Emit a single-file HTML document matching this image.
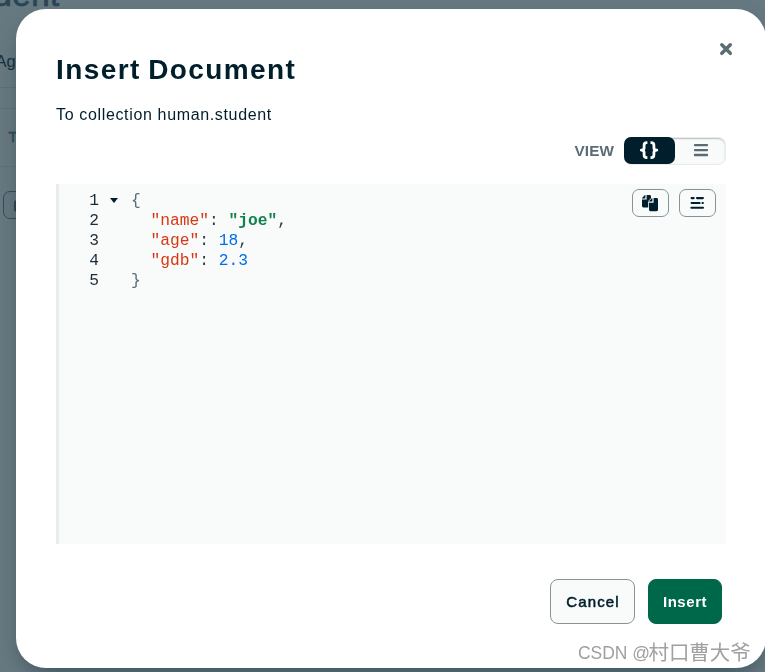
<!DOCTYPE html>
<html lang="en">
<head>
<meta charset="utf-8">
<title>Insert Document</title>
<style>
*{box-sizing:border-box;margin:0;padding:0}
html,body{width:765px;height:672px;overflow:hidden}
body{position:relative;background:#fff;font-family:"Liberation Sans","Noto Sans CJK SC",sans-serif;color:#001e2b}
.abs{position:absolute}
/* page behind the modal */
#page{left:0;top:0;width:765px;height:672px;background:#fff;overflow:hidden}
#page .h1{left:-52px;top:-25.3px;font-size:33px;font-weight:400;-webkit-text-stroke:.7px #698296;color:#698296;letter-spacing:.5px;white-space:nowrap;line-height:40px}
#page .tab{left:-4.5px;top:51px;font-size:16.5px;color:#3d4f58;line-height:20px}
#page .ln1{left:0;top:87px;width:40px;height:1px;background:#e8edeb}
#page .ln3{left:0;top:108px;width:40px;height:1px;background:#e8edeb}
#page .ln2{left:0;top:166px;width:40px;height:1px;background:#e8edeb}
#page .t{left:8.6px;top:126.6px;font-size:14.6px;color:#7c8f9a;-webkit-text-stroke:.6px #7c8f9a;line-height:20px}
#page .btn{left:3px;top:191px;width:40px;height:28px;border:1px solid #889397;border-radius:7px;background:#f9fbfa}
#page .bi{left:14.2px;top:200px;width:6px;height:11.5px;background:#6e8291;border-radius:3px 0 0 3px}
#layer{left:0;top:0;width:765px;height:672px;will-change:transform}
#overlay{left:0;top:0;width:765px;height:672px;background:rgba(0,30,43,.6)}
/* modal */
#modal{left:16px;top:9px;width:750px;height:659px;background:#fff;border-radius:30px;box-shadow:0 10px 25px -10px rgba(0,30,43,.6)}
#close{left:719px;top:42px;width:14px;height:14px}
h1.title{left:56px;top:52.4px;font-size:28px;line-height:36px;font-weight:700;color:#001e2b;white-space:nowrap;letter-spacing:1.4px;word-spacing:-1.7px}
.sub{left:56px;top:105px;font-size:16px;line-height:20px;color:#001e2b;white-space:nowrap;letter-spacing:.65px}
.viewlbl{left:574.5px;top:140.5px;font-size:15.3px;line-height:20px;font-weight:700;color:#5c6c75;letter-spacing:.15px;white-space:nowrap}
#seg{left:624px;top:137px;width:102px;height:27.5px;border-radius:7.5px;background:#f9fbfa;border:1px solid #e8edeb;box-shadow:inset 0 1px 1.5px rgba(0,30,43,.28)}
#segsel{left:624px;top:137px;width:51px;height:27px;border-radius:7px;background:#001e2b}
#editor{left:56px;top:184px;width:670px;height:360px;background:#f9fbfa;border-left:3px solid #e8edeb}
.code{font-family:"Liberation Mono",monospace;font-size:16.25px;line-height:20px;white-space:pre}
.gut{left:55px;top:191px;width:44px;text-align:right;color:#1c2d38}
.src{left:131px;top:191px;color:#2b3c46}
.p{color:#5c6c75}.k{color:#d83713}.s{color:#12824d;font-weight:700}.n{color:#016ee9}
.fold{left:109.5px;top:197.5px;width:0;height:0;border-left:4px solid transparent;border-right:4px solid transparent;border-top:5px solid #001e2b}
.ebtn{top:189px;width:37px;height:27.7px;border:1px solid #889397;border-radius:7px;background:#f9fbfa}
.fbtn{top:579px;height:45px;border-radius:8px;font-size:15px;line-height:43px;text-align:center;font-weight:700;letter-spacing:.4px;white-space:nowrap}
#cancel{left:550px;width:85px;border:1px solid #889397;background:#f9fbfa;color:#001e2b;font-weight:400;-webkit-text-stroke:.55px #001e2b;letter-spacing:1.1px;text-indent:1px}
#insert{left:648px;width:74px;border:1px solid #00684a;background:#00684a;color:#fff;letter-spacing:.55px}
#wm .wl{position:absolute;left:0;top:0;display:inline-block;font-size:19.2px;transform:scaleX(.91);transform-origin:0 0}
#wm .wc{position:absolute;left:71px;top:-.2px;font-size:20.45px}
#wm{left:577.5px;top:640px;font-size:19.5px;line-height:26px;color:#a0a0a0;white-space:nowrap;font-family:"Liberation Sans","Noto Sans CJK SC",sans-serif;text-shadow:0 0 1px #fff,0 0 2px #fff}
</style>
</head>
<body>
<div id="page" class="abs">
  <div class="abs h1">student</div>
  <div class="abs tab">Ag</div>
  <div class="abs ln1"></div>
  <div class="abs ln3"></div>
  <div class="abs t">T</div>
  <div class="abs ln2"></div>
  <div class="abs btn"></div>
  <div class="abs bi"></div>
</div>
<div id="overlay" class="abs"></div>
<div id="modal" class="abs"></div>
<div id="layer" class="abs">

<svg id="close" class="abs" viewBox="0 0 14 14"><path d="M2.8 2.8 L11.3 11.3 M11.3 2.8 L2.8 11.3" stroke="#5c6c75" stroke-width="3.5" stroke-linecap="round" fill="none"/></svg>

<h1 class="abs title">Insert Document</h1>
<div class="abs sub">To collection human.student</div>

<div class="abs viewlbl">VIEW</div>
<div id="seg" class="abs"></div>
<div id="segsel" class="abs"></div>
<svg class="abs" style="left:640px;top:141px" width="19" height="19" viewBox="0 0 19 19"><g fill="none" stroke="#fff" stroke-width="2.8" stroke-linejoin="round"><path d="M7.4 1.7H6.7Q4.1 1.7 4.1 4.3V6.7Q4.1 9.15 1.3 9.15Q4.1 9.15 4.1 11.6V14Q4.1 16.6 6.7 16.6H7.4"/><path d="M10.5 1.7H11.2Q13.9 1.7 13.9 4.3V6.7Q13.9 9.15 16.8 9.15Q13.9 9.15 13.9 11.6V14Q13.9 16.6 11.2 16.6H10.5"/></g></svg>
<svg class="abs" style="left:693px;top:143px" width="16" height="14" viewBox="0 0 16 14"><path d="M2 2.1h12M2 7.1h12M2 12h12" stroke="#5c6c75" stroke-width="2.4" stroke-linecap="round"/></svg>

<div id="editor" class="abs"></div>
<div class="abs code gut">1
2
3
4
5</div>
<div class="abs fold"></div>
<div class="abs code src"><span class="p">{</span>
  <span class="k">"name"</span>: <span class="s">"joe"</span>,
  <span class="k">"age"</span>: <span class="n">18</span>,
  <span class="k">"gdb"</span>: <span class="n">2.3</span>
<span class="p">}</span></div>

<div class="abs ebtn" style="left:632px"></div>
<svg class="abs" style="left:632px;top:189px" width="37" height="28" viewBox="632 189 37 28">
 <g fill="#001e2b">
  <path d="M646.6 195H649.6Q651 195 651 196.4V206.1Q651 207.5 649.6 207.5H643.4Q642 207.5 642 206.1V199.6H646.6Z"/>
  <path d="M645.4 195.1V198.4H642.1V197.9L644.9 195.1Z"/>
  <path d="M653.6 198.1H656.6Q658 198.1 658 199.5V209.8Q658 211.2 656.6 211.2H650.4Q649 211.2 649 209.8V202.7H653.6Z" stroke="#f9fbfa" stroke-width="1.6" paint-order="stroke"/>
  <path d="M652.4 198.2V201.5H649.1V201L651.9 198.2Z" stroke="#f9fbfa" stroke-width="1.2" paint-order="stroke"/>
 </g>
</svg>
<div class="abs ebtn" style="left:679px"></div>
<svg class="abs" style="left:679px;top:189px" width="37" height="28" viewBox="679 189 37 28">
 <path d="M691.6 198.1H693.7M697 198.1H702.9M691.6 203H699.6M702.5 203H702.9M691.4 207.7H703" stroke="#001e2b" stroke-width="2.1" stroke-linecap="round" fill="none"/>
</svg>

<div id="cancel" class="abs fbtn">Cancel</div>
<div id="insert" class="abs fbtn">Insert</div>

<div id="wm" class="abs"><span class="wl">CSDN @</span><span class="wc">村口曹大爷</span></div>
</div>
</body>
</html>
